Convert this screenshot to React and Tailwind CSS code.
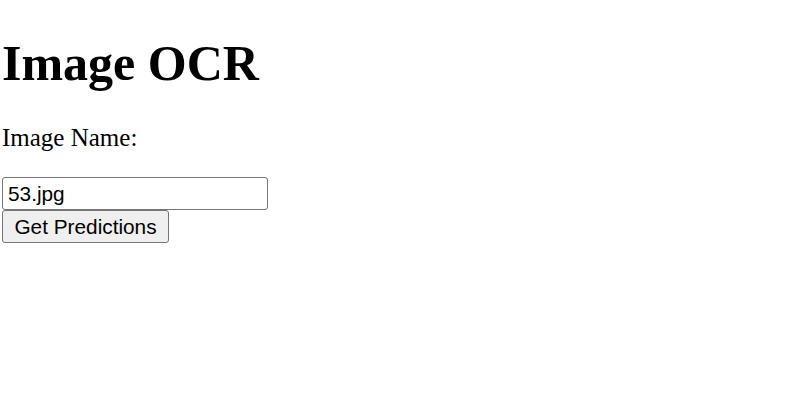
export default function App() {
  return (
    <div className="bg-white min-h-[406px] pl-[2px] pt-[2px] text-black">
      <div className="text-[25px] leading-[1.107]" style={{ fontFamily: '"Liberation Serif", "Times New Roman", serif' }}>
        <h1 className="text-[50px] font-bold leading-[1.107] mt-[33.5px] mb-[33.5px]">Image OCR</h1>
        <p className="text-[25px] leading-[27.7px] mb-[25px]">Image Name:</p>
        <div className="flex flex-col items-start" style={{ fontFamily: '"Liberation Sans", Arial, sans-serif' }}>
          <input
            type="text"
            defaultValue="53.jpg"
            className="w-[266px] h-[33px] text-[20.8px] leading-normal border-[1.5px] border-[#767676] rounded-[3px] pl-[5px] pr-[3px] bg-white outline-none text-black"
          />
          <button className="h-[33px] w-[167px] text-[20.8px] leading-normal bg-[#efefef] border-[1.5px] border-[#767676] rounded-[3px] px-[9px] text-black whitespace-nowrap">
            Get Predictions
          </button>
        </div>
      </div>
    </div>
  );
}
